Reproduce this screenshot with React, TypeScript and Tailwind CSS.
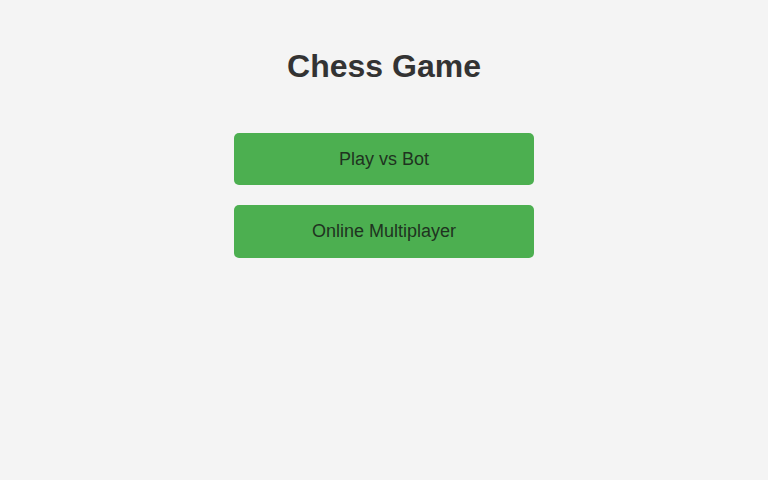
export default function App() {
  return (
    <div className="min-h-screen w-full bg-[#f4f4f4] flex flex-col items-center pt-[48px]" style={{ fontFamily: '"Liberation Sans", Arial, sans-serif' }}>
      <h1 className="text-[32px] leading-[37px] font-bold text-[#333333] m-0">Chess Game</h1>
      <div className="flex flex-col gap-[20px] mt-[48px]">
        <button className="w-[300px] h-[52px] bg-[#4caf50] rounded-[5px] text-[18px] text-[#1f3320] flex items-center justify-center">Play vs Bot</button>
        <button className="w-[300px] h-[53px] bg-[#4caf50] rounded-[5px] text-[18px] text-[#1f3320] flex items-center justify-center">Online Multiplayer</button>
      </div>
    </div>
  );
}
